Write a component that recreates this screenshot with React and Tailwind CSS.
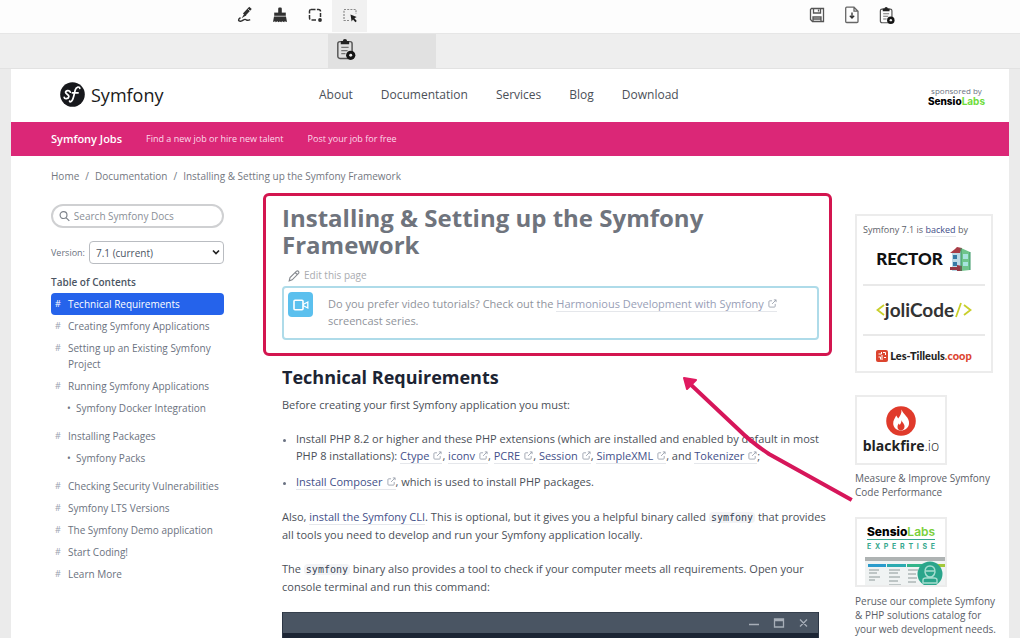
import React from "react";

const ink = "#303030";

function PenIcon() {
  return (
    <svg width="16" height="18" viewBox="0 0 16 18" fill="none" aria-hidden="true">
      <path d="M13.5 1.8 7.2 8.6" stroke={ink} strokeWidth="3.4" />
      <path d="M11 3 13.6 5.6" stroke="#fdfdfd" strokeWidth="0.7" />
      <path d="M7.6 7.2 4.6 12.2 9.4 9.2Z" fill={ink} />
      <path d="M3.5 11.6C.8 13.4 1 15.4 3.6 15.2c2.4-.2 2.8-2 4.6-1.8 1.4.2 1.6 1.8 5 .2" stroke={ink} strokeWidth="1.4" />
    </svg>
  );
}

function BrushIcon() {
  return (
    <svg width="16" height="18" viewBox="0 0 16 18" fill={ink} aria-hidden="true">
      <rect x="6.2" y="1.5" width="3.6" height="6" rx="1.2" />
      <path d="M2.2 6.6h11.6v3.2H2.2z" />
      <path d="M2 10.6h12l1 5.4-2.4-.8-.4 1-2.2-1-.6 1-1.6-.8-1.6.8-.6-1-2 1-.4-1L1 16z" />
    </svg>
  );
}

function ShapeIcon() {
  return (
    <svg width="16" height="18" viewBox="0 0 16 18" fill="none" aria-hidden="true">
      <path d="M4 3.5h7.5a2 2 0 0 1 2 2V11M9 14H4.500a2 2 0 0 1-2-2V5a1.600 1.600 0 0 1 1.500-1.500" stroke={ink} strokeWidth="1.500" strokeDasharray="4.500 1.400" />
      <circle cx="13" cy="14" r="1.900" fill={ink} />
    </svg>
  );
}

function SelectIcon() {
  return (
    <svg width="16" height="18" viewBox="0 0 16 18" fill="none" aria-hidden="true">
      <path d="M7 14.500H2v-11h12V8" stroke="#8a8a8a" strokeWidth="1.200" strokeDasharray="2 1.200" />
      <path d="m8.500 8.500 6.200 2.600-2.300 1.200 2.400 2.800-1.400 1.200-2.400-2.900-1.400 2z" fill="#1f1f1f" />
    </svg>
  );
}

function SaveIcon() {
  return (
    <svg width="16" height="16" viewBox="0 0 16 16" fill="none" stroke="#555" strokeWidth="1.300" aria-hidden="true">
      <path d="M2.500 1.500h12v13h-11l-2-2v-10z" />
      <path d="M4.500 1.500V6h7V1.500M9.500 2.500v2M4 14v-4h8v4M4 12h8" />
    </svg>
  );
}

function DownloadIcon() {
  return (
    <svg width="16" height="18" viewBox="0 0 16 18" fill="none" stroke="#666" strokeWidth="1.300" aria-hidden="true">
      <path d="M1.700 2.200q0-1 1-1H10l4 4v10.300q0 1-1 1H2.700q-1 0-1-1zM10 1.200v4h4" />
      <path d="M8 6.500v5.500M5.800 9.800 8 12l2.200-2.200" stroke={ink} />
    </svg>
  );
}

function ClipboardIcon({ className }) {
  return (
    <svg className={className} viewBox="0 0 18 20" fill="none" aria-hidden="true">
      <rect x="1.200" y="2.500" width="13.600" height="16" rx="2" stroke="#555" strokeWidth="1.400" />
      <path d="M4 1.800h2a2 1.800 0 0 1 4 0h2V5H4z" fill="#222" />
      <path d="M4.500 8h7M4.500 11h6M4.500 14h4" stroke="#777" strokeWidth="1.200" />
      <circle cx="13.500" cy="15.500" r="4.400" fill="#151515" />
      <circle cx="13.500" cy="15.500" r="1.400" fill="#eee" />
    </svg>
  );
}

function External() {
  return (
    <svg className="ml-1 inline-block size-[9px] align-baseline" viewBox="0 0 10 10" fill="none" stroke="#9ca3af" strokeWidth="1" aria-hidden="true">
      <path d="M4.500 2H2Q1 2 1 3v5q0 1 1 1h5q1 0 1-1V5.500M6.500 1H9v2.500M9 1 4.500 5.500" />
    </svg>
  );
}

function DocLink({ children, external }) {
  return (
    <a href="#" className="border-b border-gray-200 text-[#43508a]">
      {children}
      {external && <External />}
    </a>
  );
}

function Code({ children }) {
  return (
    <code className="rounded-sm bg-gray-100 px-0.5 font-['DejaVu_Sans_Mono',monospace] text-[10px] text-gray-700">
      {children}
    </code>
  );
}

function ToolButton({ label, children, active }) {
  return (
    <button
      type="button"
      aria-label={label}
      className={active ? "flex h-full w-[35px] items-center justify-center bg-[#f1f1f1] pb-0.5" : "flex h-full w-[35px] items-center justify-center pb-0.5"}
    >
      {children}
    </button>
  );
}

const toc = [
  { label: "Technical Requirements", active: true },
  { label: "Creating Symfony Applications" },
  { label: "Setting up an Existing Symfony Project" },
  { label: "Running Symfony Applications", sub: "Symfony Docker Integration" },
  { label: "Installing Packages", sub: "Symfony Packs" },
  { label: "Checking Security Vulnerabilities" },
  { label: "Symfony LTS Versions" },
  { label: "The Symfony Demo application" },
  { label: "Start Coding!" },
  { label: "Learn More" },
];

function Toolbar() {
  return (
    <div className="flex h-[34px] shrink-0 items-stretch justify-between border-b border-[#e6e6e6] bg-[#fdfdfd] pr-[116px] pl-[227px]">
      <div className="flex h-8">
        <ToolButton label="Pen"><PenIcon /></ToolButton>
        <ToolButton label="Highlighter"><BrushIcon /></ToolButton>
        <ToolButton label="Shape"><ShapeIcon /></ToolButton>
        <ToolButton label="Select area" active><SelectIcon /></ToolButton>
      </div>
      <div className="flex h-8">
        <ToolButton label="Save"><SaveIcon /></ToolButton>
        <ToolButton label="Export"><DownloadIcon /></ToolButton>
        <ToolButton label="Copy"><ClipboardIcon className="h-[17px] w-4" /></ToolButton>
      </div>
    </div>
  );
}

function Header() {
  return (
    <header className="flex h-[53px] items-center pr-6 pb-0.5 pl-[49px]">
      <a href="#" className="flex w-[259px] items-center gap-1.5 text-[18px] leading-6 text-[#1a1a1a]">
        <svg width="25" height="25" viewBox="0 0 25 25" aria-hidden="true">
          <circle cx="12.500" cy="12.500" r="12.300" fill="#17181c" />
          <path d="M10.200 10.200c-.2-2.500-5-1.800-4.600.3.300 1.700 3.600 2 3.300 4.200-.3 2.400-4.500 2.600-4.700.7" fill="none" stroke="#fff" strokeWidth="1.700" strokeLinecap="round" />
          <path d="M19.800 6.300c-.2-2-3.600-1.800-4.600 1.700-1 3.500-1.500 8.500-3.300 10.800-1 1.400-2.500 1.200-2.300.2M12.300 10.800h5.800" fill="none" stroke="#fff" strokeWidth="1.700" strokeLinecap="round" />
        </svg>
        Symfony
      </a>
      <nav className="flex flex-1 gap-7 text-[12px] text-[#4b5058]">
        <a href="#">About</a>
        <a href="#">Documentation</a>
        <a href="#">Services</a>
        <a href="#">Blog</a>
        <a href="#">Download</a>
      </nav>
      <a href="#" className="pt-0.5 text-center text-[8px] leading-[10px] text-gray-500">
        sponsored by
        <span className="block font-['Inter',sans-serif] text-[10px] font-extrabold text-black">
          Sensio<span className="font-bold text-[#6fdc3c]">Labs</span>
        </span>
      </a>
    </header>
  );
}

function Sidebar() {
  return (
    <aside className="w-[173px] shrink-0 text-[10px] leading-4 text-[#6b7280]">
      <label className="flex h-6 items-center gap-1 rounded-full border-2 border-[#cfd0d2] px-1.5">
        <svg width="12" height="12" viewBox="0 0 12 12" fill="none" stroke="#7d828a" strokeWidth="1.300" aria-hidden="true">
          <circle cx="5" cy="5" r="3.800" />
          <path d="m8 8 3.400 3.400" />
        </svg>
        <input type="search" aria-label="Search Symfony Docs" placeholder="Search Symfony Docs" className="w-full min-w-0 bg-transparent text-[10px] outline-none placeholder:text-[#8a8f97]" />
      </label>
      <div className="mt-[13px] flex items-center gap-1">
        <label htmlFor="version" className="text-[9px]">Version:</label>
        <div className="relative flex-1">
          <select id="version" className="h-[23px] w-full appearance-none rounded-sm border border-[#b9bcc1] bg-white pl-1.5 text-[10px] text-[#4b5563]">
            <option>7.1 (current)</option>
          </select>
          <svg className="pointer-events-none absolute top-2 right-1" width="8" height="7" viewBox="0 0 8 7" fill="none" stroke="#222" strokeWidth="1.700" aria-hidden="true">
            <path d="m1 1.500 3 3 3-3" />
          </svg>
        </div>
      </div>
      <h2 className="mt-2.5 mb-[3px] font-semibold text-[#4b5563]">Table of Contents</h2>
      <ul>
        {toc.map((item) => (
          <li key={item.label} className={item.sub ? "mb-1.5" : ""}>
            <a
              href="#"
              className={
                item.active
                  ? "flex gap-1.5 rounded-sm bg-[#2563eb] py-[3px] pr-1 pl-1 font-medium text-white"
                  : "flex gap-1.5 py-[3px] pl-1"
              }
            >
              <span className={item.active ? "w-[7px] shrink-0 text-[9px]" : "w-[7px] shrink-0 text-[9px] text-gray-400"}>#</span>
              {item.label}
            </a>
            {item.sub && (
              <ul>
                <li>
                  <a href="#" className="flex gap-1 py-[3px] pl-4">
                    <span className="w-[5px]">•</span>
                    {item.sub}
                  </a>
                </li>
              </ul>
            )}
          </li>
        ))}
      </ul>
    </aside>
  );
}

function Article() {
  return (
    <main className="relative ml-[58px] min-w-0 flex-1 text-[11px] leading-[17px] text-[#4b5058]">
      <div className="relative">
        <h1 className="text-[24px] leading-[27px] font-bold text-[#6f747d]">
          Installing &amp; Setting up the Symfony Framework
        </h1>
        <a href="#" className="mt-[9px] flex items-center gap-1 pl-1.5 text-[10px] text-[#a9abaf]">
          <svg width="12" height="12" viewBox="0 0 12 12" fill="none" stroke="#85898f" strokeWidth="1.100" aria-hidden="true">
            <path d="m1.200 10.800.8-3.200L8.500 1.200q1.200-.8 2 .2t0 2L4.200 9.800zM7.200 2.500l2 2" />
          </svg>
          Edit this page
        </a>
        <div className="mt-0.5 flex h-[54px] rounded border-2 border-[#aedbe9] py-1 pr-4 pl-1 text-[#8f939b]">
          <span className="mr-[15px] flex size-[25px] shrink-0 items-center justify-center rounded-sm bg-[#5bc0ee]">
            <svg width="16" height="12" viewBox="0 0 16 12" fill="none" stroke="#fff" strokeWidth="1.600" aria-hidden="true">
              <rect x="1" y="1.200" width="9" height="9.600" rx="1" />
              <path d="M10 5.500 14.800 3v6L10 6.500" strokeWidth="1.300" />
            </svg>
          </span>
          <p className="pt-[3px]">
            Do you prefer video tutorials? Check out the{" "}
            <a href="#" className="border-b border-gray-200 text-[#989eb6]">
              Harmonious Development with Symfony
              <External />
            </a>{" "}
            screencast series.
          </p>
        </div>
        <div className="pointer-events-none absolute -top-[11px] -right-[13px] -bottom-4 -left-[19px] rounded-md border-3 border-[#d3154f]" />
      </div>

      <h2 className="mt-6 text-[18px] leading-[26px] font-bold text-[#1c2433]">Technical Requirements</h2>
      <p className="mt-1.5">Before creating your first Symfony application you must:</p>
      <ul className="mt-[17px] ml-3.5 list-outside list-disc space-y-[9px] marker:text-[9px] marker:text-gray-500">
        <li>
          Install PHP 8.2 or higher and these PHP extensions (which are installed and enabled by default in most
          PHP 8 installations): <DocLink external>Ctype</DocLink>, <DocLink external>iconv</DocLink>,{" "}
          <DocLink external>PCRE</DocLink>, <DocLink external>Session</DocLink>,{" "}
          <DocLink external>SimpleXML</DocLink>, and <DocLink external>Tokenizer</DocLink>;
        </li>
        <li>
          <DocLink external>Install Composer</DocLink>, which is used to install PHP packages.
        </li>
      </ul>
      <p className="mt-[18px] -mr-3">
        Also, <DocLink>install the Symfony CLI</DocLink>. This is optional, but it gives you a helpful binary called{" "}
        <Code>symfony</Code> that provides all tools you need to develop and run your Symfony application locally.
      </p>
      <p className="mt-[17px]">
        The <Code>symfony</Code> binary also provides a tool to check if your computer meets all requirements. Open your
        console terminal and run this command:
      </p>
      <div className="mt-[17px] h-24 border-x border-[#2c3645] bg-[#1c2534]">
        <div className="flex h-[21px] items-center justify-end gap-4 border-t border-[#36404d] bg-[#4a5563] pr-[9px]">
          <svg width="62" height="12" viewBox="0 0 62 12" fill="none" stroke="#a7aeb8" strokeWidth="1.300" aria-hidden="true">
            <path d="M2 7.500h10M27.500 2h9v8h-9zM27.500 3.500h9M53 2.500l7 7M60 2.500l-7 7" />
          </svg>
        </div>
      </div>

      <svg className="pointer-events-none absolute top-[172px] left-[399px]" width="176" height="130" viewBox="0 0 176 130" fill="none" aria-hidden="true">
        <path d="M8 7 58 54Q70 66 88 78L169 123" stroke="#d6165a" strokeWidth="4" strokeLinecap="square" />
        <path d="m3 2 12 2-9 9z" fill="#e01a60" stroke="#e01a60" strokeWidth="2" strokeLinejoin="round" />
      </svg>
    </main>
  );
}

function RectorHouse() {
  return (
    <svg width="23" height="25" viewBox="0 0 23 25" aria-hidden="true">
      <path d="M3 5h9v19H3z" fill="#bcd9e6" />
      <path d="m12 1 9 4v18l-9 1z" fill="#6fc58c" />
      <path d="m1 6 5-4 2-2 5 1-2 5z" fill="#a83c46" />
      <path d="M4 8h4v4H4zM4 15h4v4H4z" fill="#3679a5" />
      <path d="M14 7h5v5h-5zM14 15h5v4h-5z" fill="#a8e4df" />
      <path d="M1 20h8v3H1zM8 18l5 1v5H8z" fill="#963845" />
      <path d="M12 1v23M21 5v18" stroke="#399666" />
    </svg>
  );
}

function Sponsors() {
  return (
    <aside className="mt-2.5 ml-9 w-[138px] shrink-0 text-[10px] leading-[14px] text-[#5b6068]">
      <section className="h-[159px] border-2 border-[#ececec] px-1.5 pt-1.5">
        <p className="text-[9px] leading-4 whitespace-nowrap">
          Symfony 7.1 is <a href="#" className="border-b border-gray-200 text-[#43508a]">backed</a> by
        </p>
        <a href="#" className="flex h-12 items-center justify-center gap-1.5 border-b-2 border-[#e9e9e9] pb-1 font-['Lato',sans-serif] text-[17px] font-black text-[#111]">
          RECTOR <RectorHouse />
        </a>
        <a href="#" className="flex h-[50px] items-center justify-center border-b-2 border-[#e9e9e9] font-['Lato',sans-serif] text-[19px] font-bold text-[#333]">
          <svg className="shrink-0" width="9" height="14" viewBox="0 0 9 14" fill="none" stroke="#c9cf2b" strokeWidth="1.800" aria-hidden="true"><path d="M8 2 1.500 7 8 12" /></svg>
          joliCode
          <svg className="shrink-0" width="18" height="16" viewBox="0 0 18 16" fill="none" stroke="#c9cf2b" strokeWidth="1.800" aria-hidden="true"><path d="M7 1 2 15M10 3l6.500 5L10 13" /></svg>
        </a>
        <a href="#" className="flex h-10 items-center justify-center gap-0.5 whitespace-nowrap font-['Lato',sans-serif] text-[11px] font-black text-[#222]">
          <svg className="shrink-0" width="12" height="12" viewBox="0 0 12 12" aria-hidden="true">
            <rect width="12" height="12" rx="2" fill="#dc442f" />
            <path d="M2.500 4h3V2M7 2.500h2.500V5M2.500 7h2v2.500M6 5v5M8 7.500h2" fill="none" stroke="#fff" />
          </svg>
          <span>Les-Tilleuls<span className="text-[#dc442f]">.coop</span></span>
        </a>
      </section>

      <section className="mt-[22px]">
        <a href="#" className="flex h-[70px] w-[92px] flex-col items-center justify-center border-2 border-[#ececec]">
          <svg width="30" height="30" viewBox="0 0 30 30" aria-hidden="true">
            <circle cx="15" cy="15" r="14.800" fill="#e03a2b" />
            <path d="M15.500 3.500c1.500 5 8.500 8 7.500 14.500-.6 4-4 6.500-8 6.500s-7.500-2.700-7.800-6.500c-.3-3.500 1.800-5.500 3-8.500l2 3c2-2.500 3.500-5 3.300-9z" fill="#fff" />
            <path d="M15.500 14c.5 2.500 3.500 4 3 7-.3 2-1.800 3.500-3.700 3.500s-3.300-1.500-3.300-3.500c0-1.500.6-2.500 1.300-3.500l1 1.500c1-1.500 1.700-3 1.700-5z" fill="#e03a2b" />
          </svg>
          <span className="mt-0.5 text-[14px] leading-4 font-bold text-[#222]">
            blackfire<span className="font-light">.io</span>
          </span>
        </a>
        <p className="mt-1.5 -mr-2">Measure &amp; Improve Symfony Code Performance</p>
      </section>

      <section className="mt-[18px]">
        <a href="#" className="flex h-[70px] w-[92px] flex-col items-center overflow-hidden border-2 border-[#ececec] pt-1.5">
          <span className="font-['Inter',sans-serif] text-[12px] leading-[14px] font-extrabold text-black">
            Sensio<span className="font-semibold text-[#7ad03c]">Labs</span>
          </span>
          <span className="flex w-[68px] justify-between border-t border-[#36a88d] font-['Inter',sans-serif] text-[7px] leading-[13px] font-bold text-[#36a88d]">
            {"EXPERTISE".split("").map((letter, i) => (
              <span key={i}>{letter}</span>
            ))}
          </span>
          <svg className="mt-1 ml-auto shrink-0" width="80" height="33" viewBox="0 0 80 33" aria-hidden="true">
            <path d="M0 0h80v33H0z" fill="#f0f3f3" />
            <path d="M0 0h80v4H0z" fill="#aeb3b3" />
            <path d="M3 7h18v3H3z" fill="#2b9ccc" />
            <path d="M22 7h19v3H22z" fill="#2cabb0" />
            <path d="M42 7h20v3H42z" fill="#32b58a" />
            <path d="M63 7h17v3H63z" fill="#a4c93a" />
            <path d="M4 13h10M4 16h8M4 20h11M4 23h6M24 13h11M24 16h9M24 20h11M24 24h9M24 28h12M43 13h10M43 17h8M43 21h9M43 25h8" stroke="#8c9898" />
            <circle cx="65" cy="17" r="12.500" fill="#2aa58b" />
            <path d="M60 15q0-6 5-6t5 6q-1 5-5 5t-5-5zM58 26v-3q0-2 3-2h8q3 0 3 2v3zM60 14h10" fill="none" stroke="#a6ddd0" strokeWidth="1.400" />
          </svg>
        </a>
        <p className="mt-[7px] -mr-2">Peruse our complete Symfony &amp; PHP solutions catalog for your web development needs.</p>
      </section>
    </aside>
  );
}

export default function App() {
  return (
    <div className="flex h-screen flex-col overflow-hidden bg-[#ebebeb] font-['Open_Sans','Noto_Sans',sans-serif]">
      <Toolbar />
      <div className="flex h-[35px] shrink-0 border-b border-[#e2e2e2] bg-[#eeeeee] pl-[328px]">
        <button type="button" aria-label="Copy selection" className="flex w-[108px] items-center bg-[#e1e1e1] pb-1 pl-2">
          <ClipboardIcon className="h-[21px] w-5" />
        </button>
      </div>
      <div className="mx-[11px] min-h-0 flex-1 overflow-hidden bg-white">
        <Header />
        <div className="flex h-[34px] items-center gap-6 bg-[#db2777] px-10 text-[9px] text-[#fbdcea]">
          <a href="#" className="text-[11px] font-semibold text-white">Symfony Jobs</a>
          <a href="#">Find a new job or hire new talent</a>
          <a href="#">Post your job for free</a>
        </div>
        <nav aria-label="Breadcrumb" className="flex h-10 items-center gap-1.5 px-10 text-[10px] text-[#73777f]">
          <a href="#">Home</a>
          <span>/</span>
          <a href="#">Documentation</a>
          <span>/</span>
          <span>Installing &amp; Setting up the Symfony Framework</span>
        </nav>
        <div className="mt-2 flex items-start pr-4 pl-10">
          <Sidebar />
          <Article />
          <Sponsors />
        </div>
      </div>
    </div>
  );
}
